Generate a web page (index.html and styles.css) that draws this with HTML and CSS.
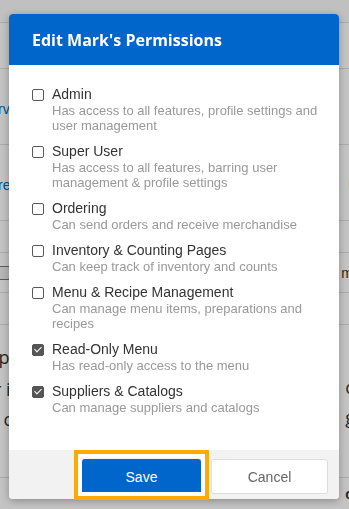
FILE: index.html
```html
<!DOCTYPE html>
<html lang="en">
<head>
    <meta charset="UTF-8">
    <meta name="viewport" content="width=device-width, initial-scale=1.0">
    <title>Edit Permissions</title>
    <link rel="stylesheet" href="styles.css">
</head>
<body>
    <div class="page">
        <div class="page-top"></div>
        <div class="row row-a"></div>
        <div class="row row-b"><span class="link">rve Menu</span></div>
        <div class="row row-b"><span class="link">re Items</span><span class="right-frag">r</span></div>
        <div class="row row-c"></div>
        <div class="row row-d">
            <span class="card-icon"></span>
            <span class="right-frag">m</span>
        </div>
        <div class="row row-c"></div>
        <div class="row row-e">
            <div class="left-text">
                <p class="big">ip</p>
                <p class="para">r i</p>
                <p class="para">. c</p>
            </div>
            <div class="right-text">
                <p class="para">c</p>
                <p class="para">g</p>
            </div>
        </div>
        <div class="row row-f"><span class="right-frag bold">c</span></div>
    </div>

    <div class="overlay">
        <div class="modal">
            <div class="modal-header">
                <h2>Edit Mark's Permissions</h2>
            </div>

            <div class="modal-body">
                <label class="perm">
                    <input type="checkbox">
                    <span class="perm-text">
                        <span class="perm-name">Admin</span>
                        <span class="perm-desc">Has access to all features, profile settings and user management</span>
                    </span>
                </label>
                <label class="perm">
                    <input type="checkbox">
                    <span class="perm-text">
                        <span class="perm-name">Super User</span>
                        <span class="perm-desc">Has access to all features, barring user management &amp; profile settings</span>
                    </span>
                </label>
                <label class="perm">
                    <input type="checkbox">
                    <span class="perm-text">
                        <span class="perm-name">Ordering</span>
                        <span class="perm-desc">Can send orders and receive merchandise</span>
                    </span>
                </label>
                <label class="perm">
                    <input type="checkbox">
                    <span class="perm-text">
                        <span class="perm-name">Inventory &amp; Counting Pages</span>
                        <span class="perm-desc">Can keep track of inventory and counts</span>
                    </span>
                </label>
                <label class="perm">
                    <input type="checkbox">
                    <span class="perm-text">
                        <span class="perm-name">Menu &amp; Recipe Management</span>
                        <span class="perm-desc">Can manage menu items, preparations and recipes</span>
                    </span>
                </label>
                <label class="perm">
                    <input type="checkbox" checked>
                    <span class="perm-text">
                        <span class="perm-name">Read-Only Menu</span>
                        <span class="perm-desc">Has read-only access to the menu</span>
                    </span>
                </label>
                <label class="perm">
                    <input type="checkbox" checked>
                    <span class="perm-text">
                        <span class="perm-name">Suppliers &amp; Catalogs</span>
                        <span class="perm-desc">Can manage suppliers and catalogs</span>
                    </span>
                </label>
            </div>

            <div class="modal-footer">
                <button type="button" class="btn btn-save">Save</button>
                <button type="button" class="btn btn-cancel">Cancel</button>
            </div>
        </div>
    </div>
</body>
</html>
```

FILE: styles.css
```css
body {
    margin: 0;
    font-family: "Liberation Sans", Arial, sans-serif;
    background: #fff;
    overflow: hidden;
}

/* page behind the dialog */
.page {
    height: 509px;
    color: #333;
}
.page-top {
    height: 22px;
    border-bottom: 1px solid #dedede;
    background: #fafafa;
}
.row {
    display: flex;
    justify-content: space-between;
    border-bottom: 1px solid #dedede;
    box-sizing: border-box;
}
.row-a {
    height: 46px;
}
.row-b {
    height: 76px;
    align-items: center;
}
.row-c {
    height: 32px;
}
.row-d {
    height: 40px;
    align-items: center;
}
.row-e {
    height: 153px;
    padding-top: 20px;
}
.row-f {
    height: 32px;
    align-items: center;
}
.link {
    color: #0066cc;
    font-size: 14px;
    margin-left: -2px;
    padding-top: 4px;
}
.right-frag {
    font-size: 14px;
    margin-left: auto;
    margin-right: -4px;
}
.bold {
    font-weight: bold;
}
.card-icon {
    width: 10px;
    height: 12px;
    margin-left: -2px;
    border: 1px solid #777;
    border-radius: 2px;
    background: #eee;
}
.left-text {
    margin-left: -6px;
}
.right-text {
    margin-right: -6px;
    padding-top: 30px;
}
.big {
    margin: 0 0 8px;
    font-size: 18px;
    font-family: "Open Sans", sans-serif;
}
.para {
    margin: 0 0 6px;
    font-size: 18px;
    font-family: "Open Sans", sans-serif;
    line-height: 24px;
}

/* dialog */
.overlay {
    position: fixed;
    top: 0;
    left: 0;
    right: 0;
    bottom: 0;
    background: rgba(0, 0, 0, 0.23);
    padding: 14px 10px 0 9px;
}
.modal {
    width: 330px;
    height: 485px;
    display: flex;
    flex-direction: column;
    background: #fff;
    border-radius: 4px;
    box-shadow: 0 2px 8px rgba(0, 0, 0, 0.3);
}
.modal-header {
    background: #0066cc;
    border-radius: 4px 4px 0 0;
    padding: 15px 23px 13px;
}
.modal-header h2 {
    margin: 0;
    color: #fff;
    font-family: "Open Sans", sans-serif;
    font-size: 16px;
    font-weight: bold;
    line-height: 23px;
}
.modal-body {
    flex: 1;
    padding: 21px 15px 0 23px;
}
.perm {
    display: flex;
    align-items: flex-start;
    gap: 8px;
    margin-bottom: 10px;
    cursor: pointer;
}
.perm input {
    appearance: none;
    -webkit-appearance: none;
    flex-shrink: 0;
    width: 12px;
    height: 12px;
    margin: 3px 0 0;
    border: 1.5px solid #5a5a5a;
    border-radius: 2px;
    background: #fff;
}
.perm input:checked {
    background: #555;
    border-color: #555;
}
.perm input:checked::after {
    content: '';
    display: block;
    width: 3px;
    height: 6px;
    margin: 0 auto;
    border: solid #fff;
    border-width: 0 1.5px 1.5px 0;
    transform: rotate(45deg);
}
.perm-text {
    display: flex;
    flex-direction: column;
}
.perm-name {
    font-size: 14px;
    line-height: 17px;
    color: #333;
}
.perm-desc {
    font-size: 13px;
    line-height: 15px;
    color: #999;
}
.modal-footer {
    display: flex;
    justify-content: flex-end;
    gap: 10px;
    padding: 9px 11px 5px;
    background: #f2f2f2;
    border-radius: 0 0 4px 4px;
}
.btn {
    height: 35px;
    border-radius: 3px;
    font-family: "Liberation Sans", Arial, sans-serif;
    font-size: 14px;
    cursor: pointer;
}
.btn-save {
    position: relative;
    width: 119px;
    background: #0066cc;
    color: #fff;
    border: none;
}
/* keyboard focus ring */
.btn-save::after {
    content: '';
    position: absolute;
    top: -9px;
    left: -8px;
    right: -8px;
    bottom: -6px;
    border: 4px solid #ffaa00;
    box-shadow: inset 0 0 0 4px #fff;
}
.btn-cancel {
    width: 117px;
    background: #fff;
    color: #666;
    border: 1px solid #ddd;
}
```
